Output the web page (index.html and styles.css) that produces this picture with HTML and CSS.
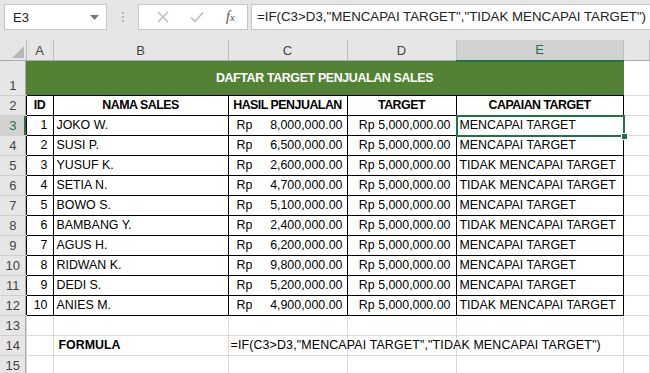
FILE: index.html
```html
<!DOCTYPE html>
<html lang="id">
<head>
    <meta charset="UTF-8">
    <meta name="viewport" content="width=device-width, initial-scale=1.0">
    <title>Daftar Target Penjualan Sales</title>
    <link rel="stylesheet" href="styles.css">
</head>
<body>
    <div class="app">
        <div class="toolbar">
            <div class="namebox">
                <span>E3</span>
                <svg width="9" height="5" viewBox="0 0 9 5"><path d="M0 0h9L4.5 5z" fill="#777"/></svg>
            </div>
            <div class="grip">
                <span></span><span></span><span></span>
            </div>
            <div class="buttons">
                <svg width="12" height="12" viewBox="0 0 12 12"><path d="M1 1l10 10M11 1L1 11" stroke="#b8b8b8" stroke-width="1.3"/></svg>
                <svg width="14" height="12" viewBox="0 0 14 12"><path d="M1 6.5l4 4L13 1.5" stroke="#b8b8b8" stroke-width="1.4" fill="none"/></svg>
                <span class="fx">f<i>x</i></span>
            </div>
            <div class="formula">=IF(C3&gt;D3,"MENCAPAI TARGET","TIDAK MENCAPAI TARGET")</div>
        </div>

        <table class="sheet">
            <colgroup>
                <col style="width:26px">
                <col style="width:27px">
                <col style="width:175px">
                <col style="width:119px">
                <col style="width:109px">
                <col style="width:167px">
                <col>
            </colgroup>
            <tr class="colhead">
                <th class="corner"><svg width="12" height="12" viewBox="0 0 12 12"><path d="M12 0v12H0z" fill="#b7b7b7"/></svg></th>
                <th>A</th>
                <th>B</th>
                <th>C</th>
                <th>D</th>
                <th class="selected">E</th>
                <th></th>
            </tr>
            <tr class="tall">
                <th class="rowhead">1</th>
                <td colspan="5" class="title">DAFTAR TARGET PENJUALAN SALES</td>
                <td></td>
            </tr>
            <tr>
                <th class="rowhead">2</th>
                <td class="box head">ID</td>
                <td class="box head">NAMA SALES</td>
                <td class="box head">HASIL PENJUALAN</td>
                <td class="box head">TARGET</td>
                <td class="box head">CAPAIAN TARGET</td>
                <td></td>
            </tr>
            <tr>
                <th class="rowhead current">3</th>
                <td class="box num">1</td>
                <td class="box">JOKO W.</td>
                <td class="box money"><span>Rp</span><span>8,000,000.00</span></td>
                <td class="box num">Rp 5,000,000.00</td>
                <td class="box active">MENCAPAI TARGET</td>
                <td></td>
            </tr>
            <tr>
                <th class="rowhead">4</th>
                <td class="box num">2</td>
                <td class="box">SUSI P.</td>
                <td class="box money"><span>Rp</span><span>6,500,000.00</span></td>
                <td class="box num">Rp 5,000,000.00</td>
                <td class="box">MENCAPAI TARGET</td>
                <td></td>
            </tr>
            <tr>
                <th class="rowhead">5</th>
                <td class="box num">3</td>
                <td class="box">YUSUF K.</td>
                <td class="box money"><span>Rp</span><span>2,600,000.00</span></td>
                <td class="box num">Rp 5,000,000.00</td>
                <td class="box">TIDAK MENCAPAI TARGET</td>
                <td></td>
            </tr>
            <tr>
                <th class="rowhead">6</th>
                <td class="box num">4</td>
                <td class="box">SETIA N.</td>
                <td class="box money"><span>Rp</span><span>4,700,000.00</span></td>
                <td class="box num">Rp 5,000,000.00</td>
                <td class="box">TIDAK MENCAPAI TARGET</td>
                <td></td>
            </tr>
            <tr>
                <th class="rowhead">7</th>
                <td class="box num">5</td>
                <td class="box">BOWO S.</td>
                <td class="box money"><span>Rp</span><span>5,100,000.00</span></td>
                <td class="box num">Rp 5,000,000.00</td>
                <td class="box">MENCAPAI TARGET</td>
                <td></td>
            </tr>
            <tr>
                <th class="rowhead">8</th>
                <td class="box num">6</td>
                <td class="box">BAMBANG Y.</td>
                <td class="box money"><span>Rp</span><span>2,400,000.00</span></td>
                <td class="box num">Rp 5,000,000.00</td>
                <td class="box">TIDAK MENCAPAI TARGET</td>
                <td></td>
            </tr>
            <tr>
                <th class="rowhead">9</th>
                <td class="box num">7</td>
                <td class="box">AGUS H.</td>
                <td class="box money"><span>Rp</span><span>6,200,000.00</span></td>
                <td class="box num">Rp 5,000,000.00</td>
                <td class="box">MENCAPAI TARGET</td>
                <td></td>
            </tr>
            <tr>
                <th class="rowhead">10</th>
                <td class="box num">8</td>
                <td class="box">RIDWAN K.</td>
                <td class="box money"><span>Rp</span><span>9,800,000.00</span></td>
                <td class="box num">Rp 5,000,000.00</td>
                <td class="box">MENCAPAI TARGET</td>
                <td></td>
            </tr>
            <tr>
                <th class="rowhead">11</th>
                <td class="box num">9</td>
                <td class="box">DEDI S.</td>
                <td class="box money"><span>Rp</span><span>5,200,000.00</span></td>
                <td class="box num">Rp 5,000,000.00</td>
                <td class="box">MENCAPAI TARGET</td>
                <td></td>
            </tr>
            <tr>
                <th class="rowhead">12</th>
                <td class="box num">10</td>
                <td class="box">ANIES M.</td>
                <td class="box money"><span>Rp</span><span>4,900,000.00</span></td>
                <td class="box num">Rp 5,000,000.00</td>
                <td class="box">TIDAK MENCAPAI TARGET</td>
                <td></td>
            </tr>
            <tr>
                <th class="rowhead">13</th>
                <td></td><td></td><td></td><td></td><td></td><td></td>
            </tr>
            <tr>
                <th class="rowhead">14</th>
                <td></td>
                <td class="bold">FORMULA</td>
                <td class="spill"><span>=IF(C3&gt;D3,"MENCAPAI TARGET","TIDAK MENCAPAI TARGET")</span></td>
                <td></td><td></td><td></td>
            </tr>
            <tr>
                <th class="rowhead">15</th>
                <td></td><td></td><td></td><td></td><td></td><td></td>
            </tr>
        </table>
    </div>
</body>
</html>
```

FILE: styles.css
```css
html, body {
    margin: 0;
    padding: 0;
    background: #fff;
}

.app {
    width: 650px;
    height: 373px;
    overflow: hidden;
    font-family: "Liberation Sans", Arial, sans-serif;
}

/* formula bar */
.toolbar {
    height: 40px;
    background: #e6e6e6;
    display: flex;
    align-items: flex-start;
    padding: 4px 0 0 4px;
    box-sizing: border-box;
}
.namebox {
    width: 103px;
    height: 26px;
    box-sizing: border-box;
    background: #fff;
    border: 1px solid #c6c6c6;
    display: flex;
    align-items: center;
    justify-content: space-between;
    padding: 0 7px 0 8px;
    font-size: 13px;
    color: #222;
}
.grip {
    width: 31px;
    height: 26px;
    display: flex;
    flex-direction: column;
    align-items: center;
    justify-content: center;
    gap: 2px;
}
.grip span {
    width: 2px;
    height: 2px;
    background: #b5b5b5;
}
.buttons {
    width: 110px;
    height: 26px;
    box-sizing: border-box;
    background: #fff;
    border: 1px solid #c6c6c6;
    display: flex;
    align-items: center;
    padding: 0 0 0 18px;
    gap: 21px;
}
.fx {
    font-family: "Liberation Serif", serif;
    font-style: italic;
    font-size: 14px;
    color: #555;
    margin-left: 1px;
}
.fx i {
    font-size: 11px;
}
.formula {
    flex-grow: 1;
    height: 26px;
    margin-left: 3px;
    box-sizing: border-box;
    background: #fff;
    border: 1px solid #c6c6c6;
    border-right: none;
    padding: 0 0 0 5px;
    line-height: 24px;
    font-size: 13.3px;
    color: #222;
    white-space: nowrap;
}

/* sheet */
.sheet {
    width: 650px;
    table-layout: fixed;
    border-collapse: collapse;
    font-size: 12.4px;
    color: #000;
}
.sheet td {
    height: 19px;
    padding: 0 3px;
    border: 1px solid #d9d9d9;
    white-space: nowrap;
    overflow: hidden;
    line-height: 19px;
}
.sheet tr.tall td,
.sheet tr.tall th {
    height: 33px;
}

.colhead th {
    height: 18px;
    padding: 0;
    background: #e6e6e6;
    border: 1px solid #bdbdbd;
    border-top: none;
    border-bottom: 1px solid #ababab;
    font-weight: normal;
    font-size: 13px;
    color: #444;
    text-align: center;
}
.colhead th.corner {
    border-left: none;
    text-align: right;
    vertical-align: bottom;
    padding: 0 2px 2px 0;
    line-height: 0;
}
.colhead th.selected {
    background: #d2d2d2;
    color: #217346;
    border-bottom: 2px solid #217346;
}

.rowhead {
    padding: 0;
    background: #e6e6e6;
    border-top: 1px solid #d0d0d0;
    border-bottom: 1px solid #d0d0d0;
    border-left: none;
    border-right: none;
    box-shadow: inset -1px 0 #ababab;
    font-weight: normal;
    font-size: 13px;
    color: #444;
    text-align: center;
    vertical-align: bottom;
    line-height: 19px;
}
.rowhead.current {
    background: #d2d2d2;
    color: #217346;
    box-shadow: inset -2px 0 #217346;
}

.sheet td.title {
    background: #548235;
    border-color: #548235;
    border-bottom-color: #000;
    color: #fff;
    font-weight: bold;
    letter-spacing: -0.35px;
    text-align: center;
    overflow: visible;
}

.sheet td.box {
    border: 1px solid #000;
}
.sheet td.head {
    font-weight: bold;
    letter-spacing: -0.5px;
    text-align: center;
}
.sheet td.num {
    text-align: right;
    padding-right: 5px;
}
.sheet td.money span:first-child {
    float: left;
    padding-left: 5px;
}
.sheet td.money span:last-child {
    float: right;
    padding-right: 1px;
}
.sheet td.bold {
    font-weight: bold;
    padding-left: 5px;
}
.sheet td.spill {
    overflow: visible;
    padding-left: 2px;
}
.sheet td.spill span {
    position: relative;
    z-index: 1;
    letter-spacing: 0.15px;
}

/* active cell */
.sheet td.active {
    position: relative;
    overflow: visible;
}
.sheet td.active::after {
    content: "";
    position: absolute;
    left: -1px;
    top: -1px;
    right: -2px;
    bottom: -2px;
    border: 2px solid #217346;
}
.sheet td.active::before {
    content: "";
    position: absolute;
    right: -5px;
    bottom: -5px;
    width: 5px;
    height: 5px;
    background: #217346;
    border: 1px solid #fff;
    z-index: 1;
}
```
